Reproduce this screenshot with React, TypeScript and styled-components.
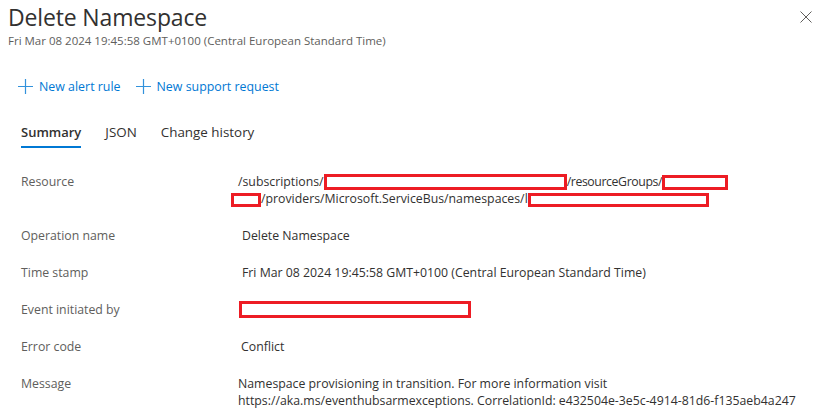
import { FC } from "react";
import styled, { createGlobalStyle } from "styled-components";

const GlobalStyle = createGlobalStyle`
  html, body {
    margin: 0;
    padding: 0;
    background: #ffffff;
  }
  body {
    font-family: "Open Sans", "Noto Sans", sans-serif;
    color: #323130;
  }
`;

const Panel = styled.div`
  width: 820px;
  height: 419px;
  overflow: hidden;
  box-sizing: border-box;
  padding: 3px 0 0 0;
  position: relative;
`;

const Header = styled.div`
  display: flex;
  justify-content: space-between;
  align-items: flex-start;
  padding: 0 7px 0 8px;
`;

const TitleBlock = styled.div`
  display: flex;
  flex-direction: column;
`;

const Title = styled.h1`
  margin: 0;
  font-size: 23px;
  font-weight: 400;
  line-height: 29px;
  letter-spacing: -0.15px;
  color: #323130;
`;

const Subtitle = styled.span`
  font-size: 11.5px;
  line-height: 16px;
  margin-top: 1px;
  color: #605e5c;
`;

const CloseButton = styled.button`
  border: none;
  background: none;
  padding: 0;
  margin-top: 7px;
  width: 14px;
  height: 14px;
  display: flex;
  align-items: center;
  justify-content: center;
  cursor: pointer;
`;

const CommandBar = styled.div`
  display: flex;
  gap: 15px;
  padding: 0 0 0 18px;
  margin-top: 29px;
`;

const Command = styled.button`
  display: flex;
  align-items: center;
  gap: 6px;
  border: none;
  background: none;
  padding: 0;
  font-family: inherit;
  font-size: 12.4px;
  color: #0078d4;
  cursor: pointer;
`;

const Tabs = styled.div`
  display: flex;
  gap: 24px;
  padding-left: 21px;
  margin-top: 28px;
`;

const Tab = styled.div<{ active?: boolean }>`
  font-size: ${(p) => (p.active ? 13 : 13.4)}px;
  line-height: 18px;
  padding-bottom: 5px;
  font-weight: ${(p) => (p.active ? 600 : 400)};
  color: #323130;
  border-bottom: 2px solid ${(p) => (p.active ? "#0078d4" : "transparent")};
`;

const Details = styled.div`
  display: grid;
  grid-template-columns: 217px 1fr;
  row-gap: 20px;
  padding: 25px 0 0 21px;
  font-size: 12.3px;
  line-height: 17px;
`;

const Label = styled.div`
  color: #605e5c;
`;

const Value = styled.div<{ indent?: number }>`
  color: #323130;
  padding-left: ${(p) => p.indent ?? 0}px;
`;

const Redacted = styled.span<{ w: number; h?: number }>`
  display: inline-block;
  box-sizing: border-box;
  width: ${(p) => p.w}px;
  height: ${(p) => p.h ?? 16}px;
  border: 3px solid #ed1c24;
  background: #ffffff;
  vertical-align: -4px;
`;

const PlusIcon: FC = () => (
  <svg width="15" height="15" viewBox="0 0 15 15">
    <path d="M7.5 0v15M0 7.5h15" stroke="#0078d4" strokeWidth="1.2" opacity="0.8" />
  </svg>
);

const CloseIcon: FC = () => (
  <svg width="12" height="12" viewBox="0 0 12 12">
    <path d="M0.5 0.5l11 11M11.5 0.5l-11 11" stroke="#605e5c" strokeWidth="1" />
  </svg>
);

const stamp = "Fri Mar 08 2024 19:45:58 GMT+0100 (Central European Standard Time)";

const App: FC = () => {
  return (
    <Panel>
      <GlobalStyle />
      <Header>
        <TitleBlock>
          <Title>Delete Namespace</Title>
          <Subtitle>{stamp}</Subtitle>
        </TitleBlock>
        <CloseButton aria-label="Close">
          <CloseIcon />
        </CloseButton>
      </Header>

      <CommandBar>
        <Command>
          <PlusIcon />
          New alert rule
        </Command>
        <Command>
          <PlusIcon />
          New support request
        </Command>
      </CommandBar>

      <Tabs>
        <Tab active>Summary</Tab>
        <Tab>JSON</Tab>
        <Tab>Change history</Tab>
      </Tabs>

      <Details>
        <Label>Resource</Label>
        <Value>
          /subscriptions/
          <Redacted w={243} />
          <span style={{ letterSpacing: -0.4 }}>/resourceGroups/</span>
          <Redacted w={66} h={15} />
          <br />
          <span style={{ marginLeft: -7 }}>
            <Redacted w={30} h={14} />
          </span>
          /providers/Microsoft.ServiceBus/namespaces/l
          <Redacted w={181} h={14} />
        </Value>

        <Label>Operation name</Label>
        <Value indent={4}>Delete Namespace</Value>

        <Label>Time stamp</Label>
        <Value indent={4}>{stamp}</Value>

        <Label>Event initiated by</Label>
        <Value indent={1}>
          <Redacted w={232} h={17} />
        </Value>

        <Label>Error code</Label>
        <Value indent={3}>Conflict</Value>

        <Label>Message</Label>
        <Value>
          Namespace provisioning in transition. For more information visit
          <br />
          https://aka.ms/eventhubsarmexceptions. CorrelationId:
          e432504e-3e5c-4914-81d6-f135aeb4a247
        </Value>
      </Details>
    </Panel>
  );
};

export default App;
